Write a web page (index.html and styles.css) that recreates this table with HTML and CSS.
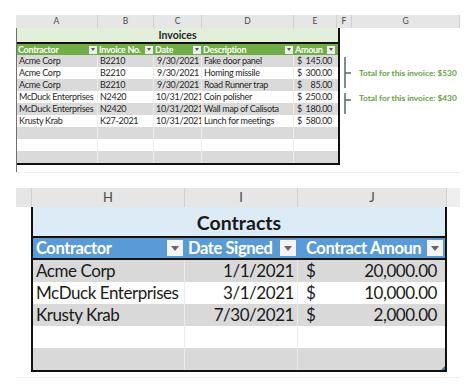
FILE: index.html
```html
<!DOCTYPE html>
<html lang="en">
<head>
    <link rel="stylesheet" href="styles.css">
    <meta charset="UTF-8">
    <meta name="viewport" content="width=device-width, initial-scale=1.0">
    <title>Invoices and contracts</title>
</head>
<body>
    <!-- invoices sheet -->
    <div class="sheet">
        <div class="col-heads small">
            <div class="col-head" style="width: 82px">A</div>
            <div class="col-head" style="width: 56px">B</div>
            <div class="col-head" style="width: 48px">C</div>
            <div class="col-head" style="width: 92px">D</div>
            <div class="col-head" style="width: 43px">E</div>
            <div class="col-head" style="width: 15px">F</div>
            <div class="col-head" style="width: 108px">G</div>
        </div>

        <div class="inv-area">
            <div class="inv-table">
                <div class="inv-title">Invoices</div>
                <div class="inv-row inv-head">
                    <div class="hcell"><span>Contractor</span><i class="filter"></i></div>
                    <div class="hcell"><span>Invoice No.</span><i class="filter"></i></div>
                    <div class="hcell"><span>Date</span><i class="filter"></i></div>
                    <div class="hcell"><span>Description</span><i class="filter"></i></div>
                    <div class="hcell"><span>Amoun</span><i class="filter"></i></div>
                </div>
                <div class="inv-row">
                    <div class="cell">Acme Corp</div>
                    <div class="cell">B2210</div>
                    <div class="cell num">9/30/2021</div>
                    <div class="cell">Fake door panel</div>
                    <div class="cell money"><span>$</span><span>145.00</span></div>
                </div>
                <div class="inv-row">
                    <div class="cell">Acme Corp</div>
                    <div class="cell">B2210</div>
                    <div class="cell num">9/30/2021</div>
                    <div class="cell">Homing missile</div>
                    <div class="cell money"><span>$</span><span>300.00</span></div>
                </div>
                <div class="inv-row">
                    <div class="cell">Acme Corp</div>
                    <div class="cell">B2210</div>
                    <div class="cell num">9/30/2021</div>
                    <div class="cell">Road Runner trap</div>
                    <div class="cell money"><span>$</span><span>85.00</span></div>
                </div>
                <div class="inv-row">
                    <div class="cell">McDuck Enterprises</div>
                    <div class="cell">N2420</div>
                    <div class="cell num">10/31/2021</div>
                    <div class="cell">Coin polisher</div>
                    <div class="cell money"><span>$</span><span>250.00</span></div>
                </div>
                <div class="inv-row">
                    <div class="cell">McDuck Enterprises</div>
                    <div class="cell">N2420</div>
                    <div class="cell num">10/31/2021</div>
                    <div class="cell">Wall map of Calisota</div>
                    <div class="cell money"><span>$</span><span>180.00</span></div>
                </div>
                <div class="inv-row">
                    <div class="cell">Krusty Krab</div>
                    <div class="cell">K27-2021</div>
                    <div class="cell num">10/31/2021</div>
                    <div class="cell">Lunch for meetings</div>
                    <div class="cell money"><span>$</span><span>580.00</span></div>
                </div>
                <div class="inv-row">
                    <div class="cell"></div><div class="cell"></div><div class="cell"></div><div class="cell"></div><div class="cell"></div>
                </div>
                <div class="inv-row">
                    <div class="cell"></div><div class="cell"></div><div class="cell"></div><div class="cell"></div><div class="cell"></div>
                </div>
                <div class="inv-row">
                    <div class="cell"></div><div class="cell"></div><div class="cell"></div><div class="cell"></div><div class="cell"></div>
                </div>
            </div>

            <!-- totals written next to the table -->
            <div class="notes">
                <div class="note note-one">
                    <svg class="brace" width="8" height="31" viewBox="0 0 8 31"><path d="M1 0V31M1 16H7"/></svg>
                    <span>Total for this invoice: $530</span>
                </div>
                <div class="note note-two">
                    <svg class="brace" width="8" height="21" viewBox="0 0 8 21"><path d="M1 0V21M1 7H7"/></svg>
                    <span>Total for this invoice: $430</span>
                </div>
            </div>
        </div>
        <div class="sheet-end"></div>
    </div>

    <!-- contracts sheet -->
    <div class="sheet sheet-two">
        <div class="col-heads big">
            <div class="col-head" style="width: 16px"></div>
            <div class="col-head" style="width: 153px">H</div>
            <div class="col-head" style="width: 113px">I</div>
            <div class="col-head" style="width: 149px">J</div>
            <div class="col-head col-fade" style="width: 13px"></div>
        </div>

        <div class="con-table">
            <div class="con-title">Contracts</div>
            <div class="con-row con-head">
                <div class="hcell"><span>Contractor</span><i class="filter"></i></div>
                <div class="hcell"><span>Date Signed</span><i class="filter"></i></div>
                <div class="hcell hcell-amount"><span>Contract Amoun</span><i class="filter"></i></div>
            </div>
            <div class="con-row">
                <div class="cell">Acme Corp</div>
                <div class="cell num">1/1/2021</div>
                <div class="cell money"><span>$</span><span>20,000.00</span></div>
            </div>
            <div class="con-row">
                <div class="cell">McDuck Enterprises</div>
                <div class="cell num">3/1/2021</div>
                <div class="cell money"><span>$</span><span>10,000.00</span></div>
            </div>
            <div class="con-row">
                <div class="cell">Krusty Krab</div>
                <div class="cell num">7/30/2021</div>
                <div class="cell money"><span>$</span><span>2,000.00</span></div>
            </div>
            <div class="con-row">
                <div class="cell"></div><div class="cell"></div><div class="cell"></div>
            </div>
            <div class="con-row">
                <div class="cell"></div><div class="cell"></div><div class="cell"></div>
            </div>
            <i class="resize"></i>
        </div>
        <div class="sheet-end"></div>
    </div>
</body>
</html>
```

FILE: styles.css
```css
body{
    margin: 0;
    background-color: #fff;
    font-family: Lato, "Liberation Sans", sans-serif;
    color: #1a1a1a;
}
.sheet{
    margin: 15px 0 0 16px;
    width: 444px;
}
.sheet-two{
    margin-top: 15px;
}

/* column letters */
.col-heads{
    display: flex;
    background-color: #e6e6e6;
    color: #4a4a4a;
}
.col-head{
    box-sizing: border-box;
    text-align: center;
    border-right: 1px solid #d0d0d0;
}
.small .col-head{
    height: 13px;
    line-height: 13px;
    font-size: 8.5px;
}
.big .col-head{
    height: 19px;
    line-height: 19px;
    font-size: 13px;
}
.col-fade{
    background-color: #efefef;
    border-right: none;
}

/* invoices */
.inv-area{
    display: flex;
    border-left: 1px solid #707070;
    height: 144px;
}
.inv-table{
    width: 321px;
    border-right: 2px solid #111;
    border-bottom: 2px solid #111;
    align-self: flex-start;
    font-size: 9px;
    letter-spacing: -0.3px;
    color: #262626;
}
.inv-title{
    height: 14px;
    line-height: 15px;
    background-color: #e2efda;
    border-bottom: 2px solid #111;
    text-align: center;
    font-weight: 700;
    font-size: 10.5px;
    letter-spacing: 0;
}
.inv-row{
    display: grid;
    grid-template-columns: 81px 56px 48px 92px 42px;
    height: 12px;
    line-height: 12px;
}
.inv-row:nth-child(odd){
    background-color: #dadada;
}
.inv-row .cell{
    padding-left: 2px;
    border-right: 1px solid #ececec;
    white-space: nowrap;
    overflow: hidden;
}
.inv-row .cell:last-child{
    border-right: none;
}
.inv-row .num{
    text-align: right;
    padding-right: 2px;
}
.inv-row .money{
    display: flex;
    justify-content: space-between;
    padding: 0 4px 0 3px;
}
.inv-head{
    height: 11px;
    line-height: 11px;
    background-color: #70ad47 !important;
    color: #fff;
    font-weight: 700;
}
.inv-head .hcell{
    display: flex;
    align-items: center;
    padding-left: 1px;
    overflow: hidden;
}
.inv-head .hcell span{
    flex: 1;
    overflow: hidden;
    white-space: nowrap;
}
.inv-head .filter{
    width: 8px;
    height: 8px;
    margin-right: 1px;
}

/* dropdown button in a table header */
.filter{
    flex: none;
    display: flex;
    align-items: center;
    justify-content: center;
    background-color: #eeeeee;
}
.filter::after{
    content: "";
    border-style: solid;
    border-color: #555 transparent transparent transparent;
}
.inv-head .filter::after{
    border-width: 3px 2px 0 2px;
}

.notes{
    flex: 1;
    padding: 29px 0 0 4px;
    display: flex;
    flex-direction: column;
}
.note{
    display: flex;
    gap: 7px;
    color: #66a044;
    font-weight: 700;
    font-size: 8.3px;
    white-space: nowrap;
}
.note-one{
    height: 31px;
    align-items: center;
}
.note-two{
    height: 21px;
    margin-top: 5px;
    line-height: 10px;
}
.brace{
    flex: none;
}
.brace path{
    stroke: #4f6e5c;
    stroke-width: 1.5;
    fill: none;
}
.sheet-end{
    border-top: 1px solid #eeeeee;
}

/* contracts */
.con-table{
    position: relative;
    width: 412px;
    margin-left: 15px;
    border: 2px solid #111;
    border-top: none;
    font-size: 17px;
    letter-spacing: -0.45px;
}
.con-title{
    height: 29px;
    line-height: 32px;
    background-color: #ddebf7;
    border-bottom: 2px solid #111;
    text-align: center;
    font-weight: 700;
    font-size: 19.5px;
    letter-spacing: 0;
}
.con-row{
    display: grid;
    grid-template-columns: 152px 113px 147px;
    height: 22px;
    line-height: 22px;
}
.con-row:nth-child(odd){
    background-color: #d9d9d9;
}
.con-row .cell{
    padding-left: 3px;
    border-right: 1px solid #ececec;
    white-space: nowrap;
    overflow: hidden;
}
.con-row .cell:last-child{
    border-right: none;
}
.con-row .num{
    text-align: right;
    padding-right: 3px;
}
.con-row .money{
    display: flex;
    justify-content: space-between;
    padding: 0 8px;
}
.con-head{
    height: 20px;
    line-height: 20px;
    background-color: #5b9bd5 !important;
    border-bottom: 2px solid #111;
    color: #fff;
    font-weight: 700;
    font-size: 16.5px;
    letter-spacing: -0.4px;
}
.con-head .hcell{
    display: flex;
    align-items: center;
    padding-left: 3px;
    overflow: hidden;
}
.con-head .hcell-amount{
    padding-left: 8px;
}
.con-head .hcell span{
    flex: 1;
    overflow: hidden;
    white-space: nowrap;
}
.con-head .filter{
    width: 16px;
    height: 16px;
    margin-right: 2px;
    background-color: #f4f4f4;
}
.con-head .filter::after{
    border-width: 5px 4px 0 4px;
    border-top-color: #666;
}
.sheet-two .sheet-end{
    margin-top: 5px;
}

/* little handle in the table corner */
.resize{
    position: absolute;
    right: 0;
    bottom: 0;
    width: 0;
    height: 0;
    border-style: solid;
    border-width: 0 0 4px 4px;
    border-color: transparent transparent #3b6fb6 transparent;
}
```
